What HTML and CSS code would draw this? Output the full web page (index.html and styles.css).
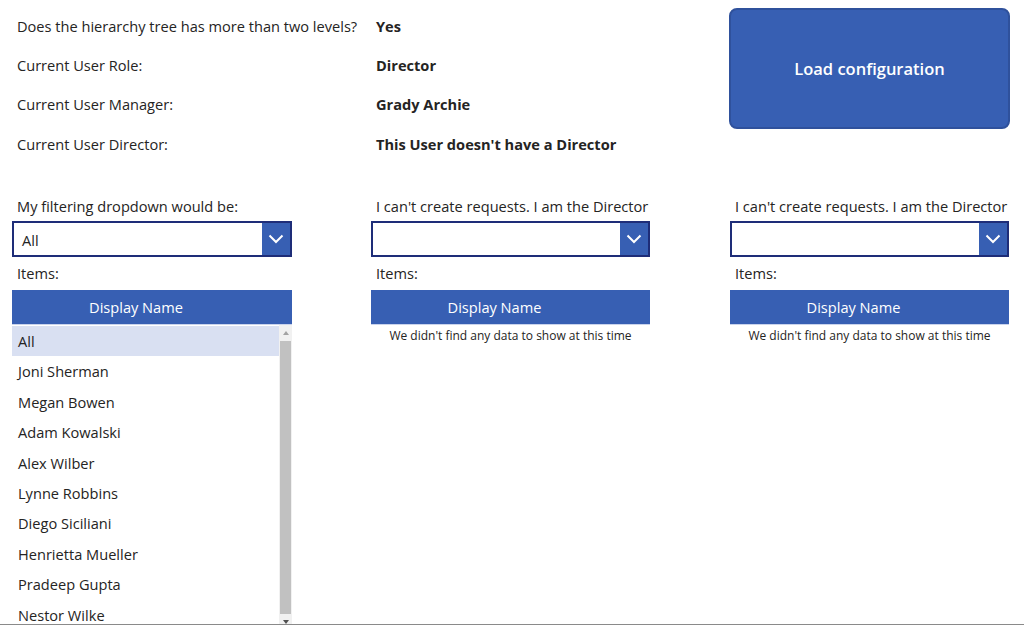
FILE: index.html
```html
<!DOCTYPE html>
<html lang="en">
<head>
    <meta charset="UTF-8">
    <meta name="viewport" content="width=device-width, initial-scale=1.0">
    <title>Hierarchy configuration</title>
    <link rel="stylesheet" href="styles.css">
</head>
<body>
    <div class="screen">
        <div class="top">
            <div class="info">
                <div class="info-label">Does the hierarchy tree has more than two levels?</div>
                <div class="info-value">Yes</div>
                <div class="info-label">Current User Role:</div>
                <div class="info-value">Director</div>
                <div class="info-label">Current User Manager:</div>
                <div class="info-value">Grady Archie</div>
                <div class="info-label">Current User Director:</div>
                <div class="info-value">This User doesn't have a Director</div>
            </div>
            <button class="load-btn">Load configuration</button>
        </div>

        <div class="columns">
            <div class="column">
                <div class="col-label">My filtering dropdown would be:</div>
                <div class="dropdown">
                    <span class="dropdown-value">All</span>
                    <span class="dropdown-arrow">
                        <svg width="16" height="10" viewBox="0 0 16 10"><path d="M1.5 1.5 L8 8 L14.5 1.5" fill="none" stroke="#fff" stroke-width="2"/></svg>
                    </span>
                </div>
                <div class="items-label">Items:</div>
                <div class="gallery-header">Display Name</div>
                <div class="gallery">
                    <div class="rows">
                        <div class="row selected">All</div>
                        <div class="row">Joni Sherman</div>
                        <div class="row">Megan Bowen</div>
                        <div class="row">Adam Kowalski</div>
                        <div class="row">Alex Wilber</div>
                        <div class="row">Lynne Robbins</div>
                        <div class="row">Diego Siciliani</div>
                        <div class="row">Henrietta Mueller</div>
                        <div class="row">Pradeep Gupta</div>
                        <div class="row">Nestor Wilke</div>
                    </div>
                    <div class="scrollbar">
                        <span class="scroll-up"></span>
                        <span class="scroll-thumb"></span>
                        <span class="scroll-down"></span>
                    </div>
                </div>
            </div>

            <div class="column">
                <div class="col-label">I can't create requests. I am the Director</div>
                <div class="dropdown">
                    <span class="dropdown-value"></span>
                    <span class="dropdown-arrow">
                        <svg width="16" height="10" viewBox="0 0 16 10"><path d="M1.5 1.5 L8 8 L14.5 1.5" fill="none" stroke="#fff" stroke-width="2"/></svg>
                    </span>
                </div>
                <div class="items-label">Items:</div>
                <div class="gallery-header">Display Name</div>
                <div class="empty">We didn't find any data to show at this time</div>
            </div>

            <div class="column">
                <div class="col-label">I can't create requests. I am the Director</div>
                <div class="dropdown">
                    <span class="dropdown-value"></span>
                    <span class="dropdown-arrow">
                        <svg width="16" height="10" viewBox="0 0 16 10"><path d="M1.5 1.5 L8 8 L14.5 1.5" fill="none" stroke="#fff" stroke-width="2"/></svg>
                    </span>
                </div>
                <div class="items-label">Items:</div>
                <div class="gallery-header">Display Name</div>
                <div class="empty">We didn't find any data to show at this time</div>
            </div>
        </div>
    </div>
</body>
</html>
```

FILE: styles.css
```css
body {
    margin: 0;
    font-family: 'Open Sans', 'Liberation Sans', sans-serif;
    color: #252423;
    background-color: #fff;
}
.screen {
    width: 1024px;
    height: 624px;
    border-bottom: 1px solid #8a8a8a;
    overflow: hidden;
}
.top {
    display: flex;
    justify-content: space-between;
    height: 191px;
}
.info {
    display: grid;
    grid-template-columns: 359px auto;
    grid-template-rows: 38px 39px 40px 40px;
    align-items: center;
    padding: 7px 0 0 17px;
    font-size: 14.6px;
}
.info-value {
    font-weight: bold;
}
.load-btn {
    width: 281px;
    height: 121px;
    margin: 8px 14px 0 0;
    font-family: inherit;
    font-size: 16.5px;
    font-weight: 600;
    color: #fff;
    background-color: #375fb3;
    border: 2px solid #2f519c;
    border-radius: 8px;
}
.columns {
    display: flex;
    gap: 79px;
    padding-left: 12px;
}
.column {
    width: 279px;
    display: flex;
    flex-direction: column;
}
.column:first-child {
    width: 280px;
}
.column:nth-child(2) {
    margin-right: 1px;
}
.col-label {
    height: 30px;
    line-height: 30px;
    padding-left: 5px;
    font-size: 14.6px;
    white-space: nowrap;
}
.dropdown {
    display: flex;
    height: 36px;
    box-sizing: border-box;
    border: 2px solid #1e2d78;
}
.dropdown-value {
    flex: 1;
    padding-left: 8px;
    line-height: 34px;
    font-size: 14.6px;
}
.dropdown-arrow {
    width: 28px;
    display: flex;
    align-items: center;
    justify-content: center;
    background-color: #375fb3;
}
.items-label {
    height: 33px;
    line-height: 33px;
    padding-left: 5px;
    font-size: 14.6px;
}
.gallery-header {
    height: 34px;
    line-height: 34px;
    padding-right: 32px;
    text-align: center;
    font-size: 14.6px;
    color: #fff;
    background-color: #375fb3;
    border-bottom: 1px solid #c9d3ec;
}
.gallery {
    display: flex;
}
.rows {
    flex: 1;
    padding-top: 1px;
}
.row {
    height: 30.4px;
    line-height: 31px;
    padding-left: 6px;
    font-size: 14.6px;
}
.row.selected {
    background-color: #d9e0f2;
}
.scrollbar {
    width: 13px;
    display: flex;
    flex-direction: column;
    align-items: center;
    background-color: #f1f1f1;
}
.scroll-up,
.scroll-down {
    width: 0;
    height: 0;
    margin: 6px 0;
    border-left: 3px solid transparent;
    border-right: 3px solid transparent;
}
.scroll-up {
    border-bottom: 4px solid #a3a3a3;
}
.scroll-down {
    border-top: 4px solid #505050;
}
.scroll-thumb {
    width: 11px;
    flex: 1;
    background-color: #c1c1c1;
}
.empty {
    height: 22px;
    line-height: 22px;
    text-align: center;
    font-size: 12px;
}
```
